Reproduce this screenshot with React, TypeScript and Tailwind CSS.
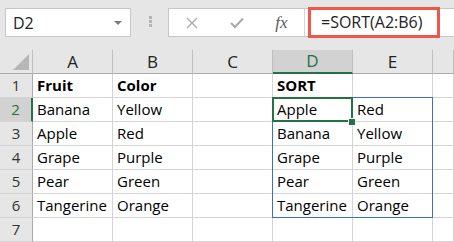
import React from "react";

const data: [string, string, string, string][] = [
  ["Banana", "Yellow", "Apple", "Red"],
  ["Apple", "Red", "Banana", "Yellow"],
  ["Grape", "Purple", "Grape", "Purple"],
  ["Pear", "Green", "Pear", "Green"],
  ["Tangerine", "Orange", "Tangerine", "Orange"],
];

const cols = ["A", "B", "C", "D", "E", ""];

const cell = "h-[24px] border-r border-b border-[#d4d4d4] bg-white flex items-center pl-[4px] text-[15px] text-black whitespace-nowrap";

function FormulaBar() {
  return (
    <div className="h-[50px] bg-[#e6e6e6] flex items-start pt-[8px]">
      <div className="ml-[5px] w-[126px] h-[29px] border border-[#c6c6c6] bg-white flex items-center justify-between pl-[7px] pr-[8px]">
        <span className="text-[16px] text-[#222]">D2</span>
        <div className="w-0 h-0 border-x-[4px] border-x-transparent border-t-[4px] border-t-[#7a7a7a]" />
      </div>
      <div className="ml-[18px] mt-[8px] flex flex-col gap-[1px]">
        <div className="w-[3px] h-[3px] bg-[#b5b5b5]" />
        <div className="w-[3px] h-[3px] bg-[#b5b5b5]" />
        <div className="w-[3px] h-[3px] bg-[#b5b5b5]" />
      </div>
      <div className="ml-[16px] flex-1 h-[29px] border border-r-0 border-[#c6c6c6] bg-white flex items-center">
        <div className="w-[136px] h-full border-r border-[#d4d4d4] flex items-center">
          <div className="w-[45px] flex justify-center">
            <svg width="12" height="12" viewBox="0 0 12 12">
              <path d="M1 1 L11 11 M11 1 L1 11" stroke="#a8a8a8" strokeWidth="1.3" fill="none" />
            </svg>
          </div>
          <div className="w-[45px] flex justify-center">
            <svg width="14" height="12" viewBox="0 0 14 12">
              <path d="M1 6 L5 10 L13 1.5" stroke="#a8a8a8" strokeWidth="2" fill="none" />
            </svg>
          </div>
          <div className="w-[45px] flex justify-center">
            <span className="text-[17px] italic text-[#5a5a5a] font-['Liberation_Serif',serif] leading-none">fx</span>
          </div>
        </div>
        <div className="ml-[3px] w-[132px] h-[31px] -mt-[1px] border-[3px] border-[#f0564b] flex items-center pl-[10px]">
          <span className="text-[16px] text-[#222]">=SORT(A2:B6)</span>
        </div>
      </div>
    </div>
  );
}

export default function App() {
  return (
    <div className="w-[454px] h-[242px] overflow-hidden bg-white font-['Open_Sans',sans-serif]">
      <FormulaBar />
      <div className="grid grid-cols-[33px_80px_80px_80px_80px_80px_1fr]">
        {/* header row */}
        <div className="h-[24px] bg-[#e6e6e6] border-r border-b border-r-[#bfbfbf] border-b-[#ababab] relative">
          <svg className="absolute left-[13px] top-[4px]" width="16" height="16" viewBox="0 0 16 16">
            <polygon points="0,16 16,16 16,0" fill="#b7b7b7" />
          </svg>
        </div>
        {cols.map((c) =>
          c === "D" ? (
            <div key={c} className="h-[24px] bg-[#d2d2d2] border-r border-r-[#bfbfbf] border-b-2 border-b-[#217346] flex items-center justify-center text-[17px] text-[#217346]">
              {c}
            </div>
          ) : (
            <div key={c || "f"} className="h-[24px] bg-[#e6e6e6] border-r border-r-[#bfbfbf] border-b border-b-[#ababab] flex items-center justify-center text-[17px] text-[#222]">
              {c}
            </div>
          )
        )}

        {/* row 1 */}
        <div className="h-[24px] bg-[#e6e6e6] border-r border-b border-r-[#ababab] border-b-[#d4d4d4] flex items-center justify-center text-[15px] text-[#333]">1</div>
        <div className={`${cell} font-bold`}>Fruit</div>
        <div className={`${cell} font-bold`}>Color</div>
        <div className={cell} />
        <div className={`${cell} font-bold`}>SORT</div>
        <div className={cell} />
        <div className={cell} />

        {data.map((r, i) => (
          <React.Fragment key={i}>
            {i === 0 ? (
              <div className="h-[24px] bg-[#d2d2d2] border-r-2 border-b border-r-[#217346] border-b-[#d4d4d4] flex items-center justify-center text-[15px] text-[#217346]">2</div>
            ) : (
              <div className="h-[24px] bg-[#e6e6e6] border-r border-b border-r-[#ababab] border-b-[#d4d4d4] flex items-center justify-center text-[15px] text-[#333]">{i + 2}</div>
            )}
            <div className={cell}>{r[0]}</div>
            <div className={cell}>{r[1]}</div>
            <div className={cell} />
            {i === 0 ? (
              <div className={`${cell} relative`}>
                {r[2]}
                {/* spill range outline D2:E6 */}
                <div className="absolute -left-[1px] -top-[1px] w-[161px] h-[121px] border border-[#3a6fc7] z-10 pointer-events-none" />
                <div className="absolute -left-[1px] -top-[1px] -right-[1px] -bottom-[1px] border-2 border-[#217346] z-20" />
                <div className="absolute -right-[3px] -bottom-[4px] w-[6px] h-[6px] bg-[#217346] ring-1 ring-white z-30" />
              </div>
            ) : (
              <div className={cell}>{r[2]}</div>
            )}
            <div className={cell}>{r[3]}</div>
            <div className={cell} />
          </React.Fragment>
        ))}

        {/* row 7 */}
        <div className="h-[24px] bg-[#e6e6e6] border-r border-b border-r-[#ababab] border-b-[#d4d4d4] flex items-center justify-center text-[15px] text-[#333]">7</div>
        <div className={cell} />
        <div className={cell} />
        <div className={cell} />
        <div className={cell} />
        <div className={cell} />
        <div className={cell} />
      </div>
    </div>
  );
}
